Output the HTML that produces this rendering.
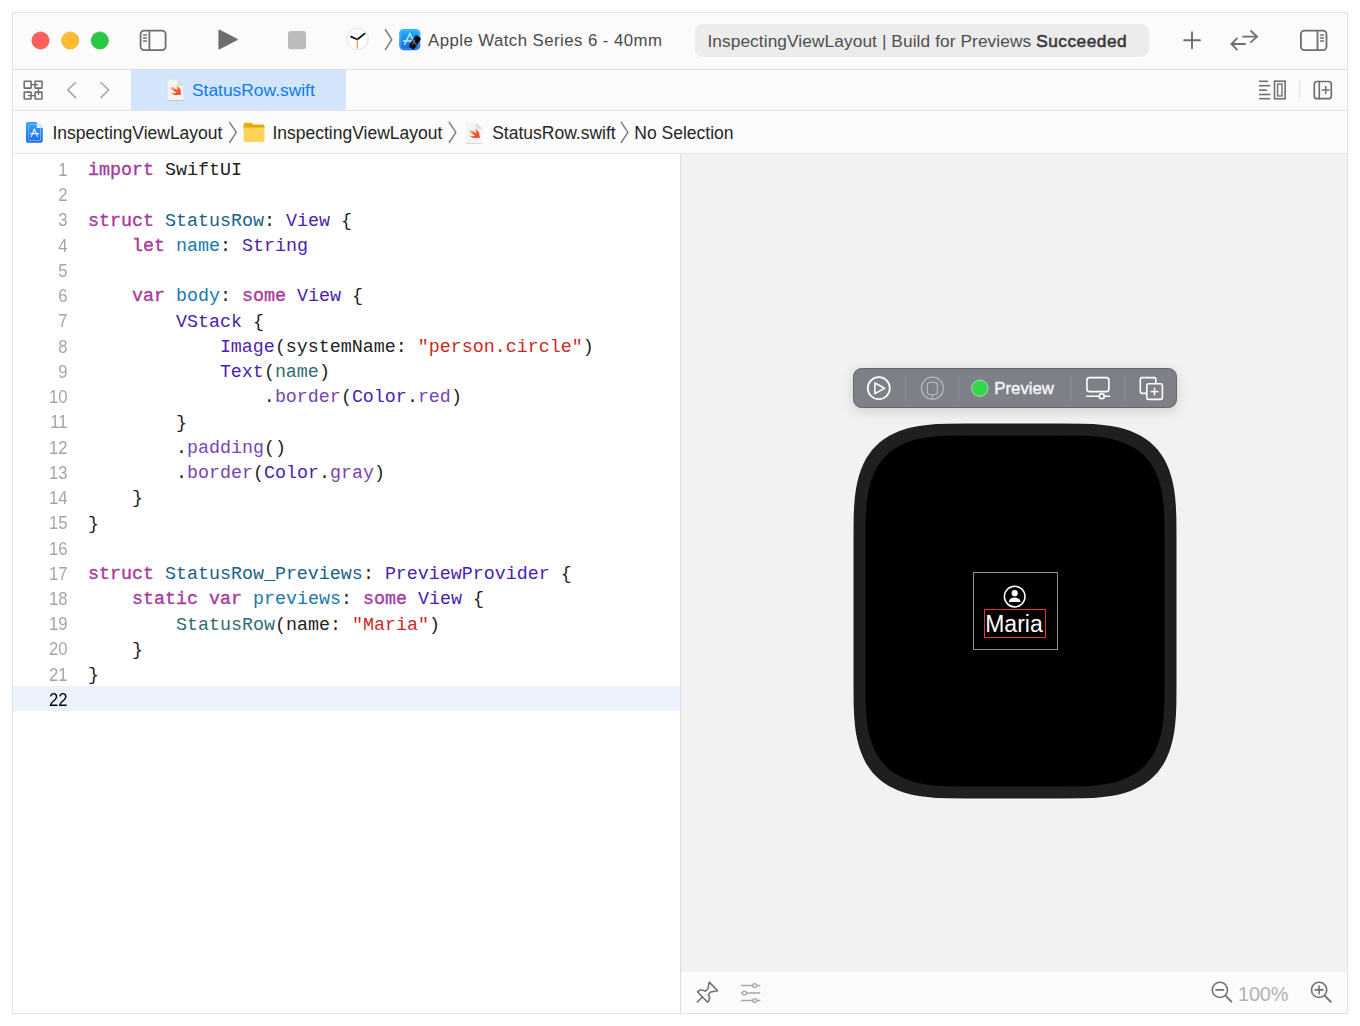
<!DOCTYPE html>
<html><head><meta charset="utf-8">
<style>
html,body{margin:0;padding:0;background:#fff;width:1360px;height:1026px;overflow:hidden;}
body{font-family:"Liberation Sans",sans-serif;position:relative;}
.a{position:absolute;}
.t{position:absolute;white-space:pre;font-family:"Liberation Sans",sans-serif;line-height:1;}
#code{position:absolute;left:87.9px;top:158.3px;font-family:"Liberation Mono",monospace;font-size:18.335px;line-height:25.24px;white-space:pre;color:#222222;}
#ln{position:absolute;left:13px;width:54.5px;top:157px;transform:scaleX(0.9);transform-origin:100% 0;font-family:"Liberation Sans",sans-serif;font-size:18.5px;line-height:25.24px;text-align:right;color:#a5a5a5;white-space:pre;}
.kw{color:#a73a9c;-webkit-text-stroke:0.35px #a73a9c;}
.td{color:#1a6188;}
.od{color:#1a78ad;}
.ty{color:#4a1eb0;}
.fn{color:#7844b5;}
.pv{color:#2f6c72;}
.st{color:#cc2a1f;}
</style></head>
<body>
<!-- window frame -->
<div class="a" style="left:12px;top:12px;width:1334px;height:1000px;border:1px solid #e3e3e3;"></div>
<!-- toolbar -->
<div class="a" style="left:13px;top:13px;width:1334px;height:56px;background:#fbfbfb;"></div>
<div class="a" style="left:13px;top:69px;width:1334px;height:1px;background:#dedede;"></div>
<!-- tab bar -->
<div class="a" style="left:13px;top:70px;width:1334px;height:40px;background:#fcfcfc;"></div>
<div class="a" style="left:131px;top:70px;width:215px;height:40px;background:#d3e5fa;"></div>
<div class="a" style="left:13px;top:110px;width:1334px;height:1px;background:#e1e1e1;"></div>
<!-- breadcrumbs -->
<div class="a" style="left:13px;top:111px;width:1334px;height:42px;background:#fcfcfc;"></div>
<div class="a" style="left:13px;top:153px;width:1334px;height:1px;background:#e6e6e6;"></div>
<!-- editor -->
<div class="a" style="left:13px;top:154px;width:667px;height:859px;background:#fff;"></div>
<div class="a" style="left:13px;top:686px;width:667px;height:25px;background:#ebf3fe;"></div>
<div class="a" style="left:680px;top:154px;width:1px;height:859px;background:#dcdcdc;"></div>
<!-- preview canvas -->
<div class="a" style="left:681px;top:154px;width:666px;height:818px;background:#f2f2f2;"></div>
<div class="a" style="left:681px;top:972px;width:666px;height:41px;background:#fcfcfc;"></div>

<!--SHAPES-->
<div class="a" style="left:695px;top:24px;width:454px;height:32.5px;border-radius:8px;background:#ececec;"></div>
<!-- preview floating toolbar -->
<div class="a" style="left:853px;top:368.3px;width:324px;height:39.4px;box-sizing:border-box;border-radius:8.5px;background:#7e8088;border:1.2px solid #65666b;box-shadow:0 3px 14px rgba(0,0,0,0.15);"></div>
<!-- watch -->
<svg class="a" style="left:0;top:0;" width="1360" height="1026" viewBox="0 0 1360 1026"><path id="wout" d="M1061.50 423.50 L1082.41 423.65 L1093.71 424.12 L1102.91 424.89 L1110.91 425.96 L1118.08 427.35 L1124.59 429.05 L1130.57 431.06 L1136.07 433.39 L1141.15 436.03 L1145.83 438.99 L1150.14 442.28 L1154.10 445.90 L1157.72 449.86 L1161.01 454.17 L1163.97 458.85 L1166.61 463.93 L1168.94 469.43 L1170.95 475.41 L1172.65 481.92 L1174.04 489.09 L1175.11 497.09 L1175.88 506.29 L1176.35 517.59 L1176.50 538.50 L1176.50 683.50 L1176.35 704.41 L1175.88 715.71 L1175.11 724.91 L1174.04 732.91 L1172.65 740.08 L1170.95 746.59 L1168.94 752.57 L1166.61 758.07 L1163.97 763.15 L1161.01 767.83 L1157.72 772.14 L1154.10 776.10 L1150.14 779.72 L1145.83 783.01 L1141.15 785.97 L1136.07 788.61 L1130.57 790.94 L1124.59 792.95 L1118.08 794.65 L1110.91 796.04 L1102.91 797.11 L1093.71 797.88 L1082.41 798.35 L1061.50 798.50 L968.50 798.50 L947.59 798.35 L936.29 797.88 L927.09 797.11 L919.09 796.04 L911.92 794.65 L905.41 792.95 L899.43 790.94 L893.93 788.61 L888.85 785.97 L884.17 783.01 L879.86 779.72 L875.90 776.10 L872.28 772.14 L868.99 767.83 L866.03 763.15 L863.39 758.07 L861.06 752.57 L859.05 746.59 L857.35 740.08 L855.96 732.91 L854.89 724.91 L854.12 715.71 L853.65 704.41 L853.50 683.50 L853.50 538.50 L853.65 517.59 L854.12 506.29 L854.89 497.09 L855.96 489.09 L857.35 481.92 L859.05 475.41 L861.06 469.43 L863.39 463.93 L866.03 458.85 L868.99 454.17 L872.28 449.86 L875.90 445.90 L879.86 442.28 L884.17 438.99 L888.85 436.03 L893.93 433.39 L899.43 431.06 L905.41 429.05 L911.92 427.35 L919.09 425.96 L927.09 424.89 L936.29 424.12 L947.59 423.65 L968.50 423.50 Z" fill="#1f1f1f"/><path id="win" d="M1061.50 435.50 L1079.73 435.64 L1089.77 436.06 L1097.99 436.76 L1105.17 437.74 L1111.61 439.01 L1117.47 440.55 L1122.86 442.38 L1127.83 444.49 L1132.42 446.89 L1136.66 449.58 L1140.57 452.56 L1144.16 455.84 L1147.44 459.43 L1150.42 463.34 L1153.11 467.58 L1155.51 472.17 L1157.62 477.14 L1159.45 482.53 L1160.99 488.39 L1162.26 494.83 L1163.24 502.01 L1163.94 510.23 L1164.36 520.27 L1164.50 538.50 L1164.50 683.50 L1164.36 701.73 L1163.94 711.77 L1163.24 719.99 L1162.26 727.17 L1160.99 733.61 L1159.45 739.47 L1157.62 744.86 L1155.51 749.83 L1153.11 754.42 L1150.42 758.66 L1147.44 762.57 L1144.16 766.16 L1140.57 769.44 L1136.66 772.42 L1132.42 775.11 L1127.83 777.51 L1122.86 779.62 L1117.47 781.45 L1111.61 782.99 L1105.17 784.26 L1097.99 785.24 L1089.77 785.94 L1079.73 786.36 L1061.50 786.50 L968.50 786.50 L950.27 786.36 L940.23 785.94 L932.01 785.24 L924.83 784.26 L918.39 782.99 L912.53 781.45 L907.14 779.62 L902.17 777.51 L897.58 775.11 L893.34 772.42 L889.43 769.44 L885.84 766.16 L882.56 762.57 L879.58 758.66 L876.89 754.42 L874.49 749.83 L872.38 744.86 L870.55 739.47 L869.01 733.61 L867.74 727.17 L866.76 719.99 L866.06 711.77 L865.64 701.73 L865.50 683.50 L865.50 538.50 L865.64 520.27 L866.06 510.23 L866.76 502.01 L867.74 494.83 L869.01 488.39 L870.55 482.53 L872.38 477.14 L874.49 472.17 L876.89 467.58 L879.58 463.34 L882.56 459.43 L885.84 455.84 L889.43 452.56 L893.34 449.58 L897.58 446.89 L902.17 444.49 L907.14 442.38 L912.53 440.55 L918.39 439.01 L924.83 437.74 L932.01 436.76 L940.23 436.06 L950.27 435.64 L968.50 435.50 Z" fill="#000"/></svg>

<div class="a" style="left:972.5px;top:571.5px;width:85.5px;height:78.5px;box-sizing:border-box;border:1.5px solid #8e8f94;"></div>
<div class="a" style="left:984.3px;top:609.3px;width:61.5px;height:29px;box-sizing:border-box;border:1.5px solid #e5392f;"></div>
<div id="ln">1
2
3
4
5
6
7
8
9
10
11
12
13
14
15
16
17
18
19
20
21
<span style="color:#000">22</span></div>
<div id="code"><span class="kw">import</span> SwiftUI

<span class="kw">struct</span> <span class="td">StatusRow</span>: <span class="ty">View</span> {
    <span class="kw">let</span> <span class="od">name</span>: <span class="ty">String</span>

    <span class="kw">var</span> <span class="od">body</span>: <span class="kw">some</span> <span class="ty">View</span> {
        <span class="ty">VStack</span> {
            <span class="ty">Image</span>(systemName: <span class="st">"person.circle"</span>)
            <span class="ty">Text</span>(<span class="pv">name</span>)
                .<span class="fn">border</span>(<span class="ty">Color</span>.<span class="fn">red</span>)
        }
        .<span class="fn">padding</span>()
        .<span class="fn">border</span>(<span class="ty">Color</span>.<span class="fn">gray</span>)
    }
}

<span class="kw">struct</span> <span class="td">StatusRow_Previews</span>: <span class="ty">PreviewProvider</span> {
    <span class="kw">static</span> <span class="kw">var</span> <span class="od">previews</span>: <span class="kw">some</span> <span class="ty">View</span> {
        <span class="pv">StatusRow</span>(name: <span class="st">"Maria"</span>)
    }
}
</div>

<div class="t" style="left:428px;top:32.98px;font-size:16.8px;letter-spacing:0.45px;color:#4a4a4a;">Apple Watch Series 6 - 40mm</div>
<div class="t" style="left:707.4px;top:32.56px;font-size:17.3px;color:#4f4f4f;letter-spacing:0.09px;">InspectingViewLayout | Build for Previews <span style="color:#383838;font-size:17.3px;letter-spacing:0.5px;-webkit-text-stroke:0.55px #383838;">Succeeded</span></div>
<div class="t" style="left:192px;top:82.27px;font-size:17.4px;color:#0d7af6;">StatusRow.swift</div>
<div class="t" style="left:52.5px;top:124.69px;font-size:17.5px;color:#262626;">InspectingViewLayout</div>
<div class="t" style="left:272.4px;top:124.69px;font-size:17.5px;color:#262626;">InspectingViewLayout</div>
<div class="t" style="left:492.2px;top:124.69px;font-size:17.5px;color:#262626;">StatusRow.swift</div>
<div class="t" style="left:634.3px;top:124.69px;font-size:17.5px;color:#262626;">No Selection</div>
<div class="t" style="left:994.3px;top:381.4px;font-size:16.8px;color:#f4f4f4;-webkit-text-stroke:0.45px #f4f4f4;">Preview</div>
<div class="t" style="left:985.2px;top:613.43px;font-size:23px;color:#ffffff;">Maria</div>
<div class="t" style="left:1238px;top:984.47px;font-size:20px;color:#b3b3b3;letter-spacing:-0.2px;">100%</div>

<svg class="a" style="left:0;top:0;" width="1360" height="1026" viewBox="0 0 1360 1026">
<defs>
 <linearGradient id="appg" x1="0" y1="0" x2="0" y2="1"><stop offset="0" stop-color="#22b5fa"/><stop offset="1" stop-color="#1565e6"/></linearGradient>
 <linearGradient id="projg" x1="0" y1="0" x2="0" y2="1"><stop offset="0" stop-color="#3aa0f8"/><stop offset="1" stop-color="#1a6fe0"/></linearGradient>
 <linearGradient id="swg" x1="0" y1="0" x2="1" y2="1"><stop offset="0" stop-color="#f88a3a"/><stop offset="1" stop-color="#f03a2a"/></linearGradient>
 <linearGradient id="foldg" x1="0" y1="0" x2="0" y2="1"><stop offset="0" stop-color="#fcd55a"/><stop offset="1" stop-color="#f7c236"/></linearGradient>
</defs>
<!-- toolbar: traffic lights -->
<circle cx="40.5" cy="40.5" r="8.6" fill="#fe5f57" stroke="#e0443e" stroke-width="0.6"/>
<circle cx="70.2" cy="40.5" r="8.6" fill="#febc2e" stroke="#dea02a" stroke-width="0.6"/>
<circle cx="99.8" cy="40.5" r="8.6" fill="#28c840" stroke="#1eaa30" stroke-width="0.6"/>
<!-- sidebar toggle -->
<g fill="none" stroke="#6e6e6e" stroke-width="1.8" stroke-linecap="round">
 <rect x="140.6" y="30.6" width="25" height="19.6" rx="3.6"/>
 <line x1="149.4" y1="30.6" x2="149.4" y2="50.2"/>
 <line x1="143.6" y1="35" x2="146.4" y2="35" stroke-width="1.6"/>
 <line x1="143.6" y1="38" x2="146.4" y2="38" stroke-width="1.6"/>
 <line x1="143.6" y1="41" x2="146.4" y2="41" stroke-width="1.6"/>
</g>
<!-- play -->
<path d="M219.3,30.6 L236.8,39.5 L219.3,48.5 Z" fill="#6e6e6e" stroke="#6e6e6e" stroke-width="1.8" stroke-linejoin="round"/>
<!-- stop -->
<rect x="288" y="31" width="18" height="18.2" rx="2.6" fill="#bcbcbc"/>
<!-- clock -->
<circle cx="357.6" cy="39" r="10.6" fill="#ffffff" stroke="#dadada" stroke-width="0.8"/>
<path d="M351.1,36.6 L357.3,39.5 L364.6,33.6" fill="none" stroke="#111" stroke-width="1.8" stroke-linecap="round" stroke-linejoin="round"/>
<line x1="357.3" y1="39.5" x2="357.3" y2="48.4" stroke="#f29b38" stroke-width="1.3"/>
<!-- chevron -->
<polyline points="385.4,29.6 391.8,39.6 385.4,49.6" fill="none" stroke="#707070" stroke-width="1.4" stroke-linecap="round" stroke-linejoin="round"/>
<!-- app icon -->
<rect x="399.3" y="29" width="21" height="21.2" rx="4.6" fill="url(#appg)"/>
<rect x="400.6" y="30.3" width="18.4" height="18.6" rx="3.6" fill="none" stroke="#7fd0ff" stroke-width="0.6" opacity="0.7"/>
<g stroke="#cfe8ff" stroke-width="1.4" stroke-linecap="round" fill="none">
 <line x1="410" y1="33.5" x2="404.5" y2="44.5"/>
 <line x1="409.5" y1="33.5" x2="414.5" y2="42"/>
 <line x1="403.5" y1="41" x2="414" y2="41"/>
</g>
<rect x="-3.2" y="-6.9" width="6.4" height="13.8" rx="1.6" fill="#0d0d0d" transform="translate(414.9,42.4) rotate(33.6)"/>
<path d="M413.2,40.2 L416.6,45.2 M414.8,39.4 L412.4,44.8" stroke="#9a9a9a" stroke-width="0.9" fill="none"/>
<!-- plus -->
<g stroke="#6e6e6e" stroke-width="1.9" stroke-linecap="round" fill="none">
 <line x1="1184.2" y1="40.2" x2="1200" y2="40.2"/>
 <line x1="1192" y1="32.3" x2="1192" y2="48.3"/>
</g>
<!-- arrows -->
<g stroke="#6e6e6e" stroke-width="1.8" stroke-linecap="round" stroke-linejoin="round" fill="none">
 <line x1="1243" y1="36.6" x2="1257" y2="36.6"/>
 <polyline points="1251,31 1257,36.6 1251,42.2"/>
 <line x1="1231.5" y1="44" x2="1245" y2="44"/>
 <polyline points="1237,38.4 1231.5,44 1237,49.6"/>
</g>
<!-- inspector toggle -->
<g fill="none" stroke="#6e6e6e" stroke-width="1.8" stroke-linecap="round">
 <rect x="1300.9" y="30.6" width="25.6" height="19.6" rx="3.6"/>
 <line x1="1317.5" y1="30.6" x2="1317.5" y2="50.2"/>
 <line x1="1320.6" y1="35" x2="1323.4" y2="35" stroke-width="1.6"/>
 <line x1="1320.6" y1="38" x2="1323.4" y2="38" stroke-width="1.6"/>
 <line x1="1320.6" y1="41" x2="1323.4" y2="41" stroke-width="1.6"/>
</g>
</svg>

<svg class="a" style="left:0;top:0;" width="1360" height="1026" viewBox="0 0 1360 1026">
<defs>
 <linearGradient id="projg" x1="0" y1="0" x2="0" y2="1"><stop offset="0" stop-color="#1ea6f4"/><stop offset="1" stop-color="#0065e2"/></linearGradient>
 <linearGradient id="swg" x1="0" y1="0" x2="0.6" y2="1"><stop offset="0" stop-color="#f9a45a"/><stop offset="1" stop-color="#f53524"/></linearGradient>
 <filter id="sh" x="-30%" y="-30%" width="160%" height="160%"><feDropShadow dx="0" dy="0.6" stdDeviation="0.6" flood-color="#000" flood-opacity="0.22"/></filter>
 <g id="swiftdoc">
  <path d="M0.5,0 L10.5,0 L16.5,6 L16.5,20.2 L0.5,20.2 Z" fill="#f4f4f4" filter="url(#sh)"/>
  <path d="M10.5,0 L10.5,6 L16.5,6 Z" fill="#dcdcdc"/>
  <path transform="translate(1.3,4.1) scale(0.15,0.137)" d="M82,66 C84,60 85,45 74,30 C66,20 55,12 55,12 C55,12 64,28 60,45 C45,35 25,20 20,15 C30,28 38,38 45,45 C35,40 20,30 12,25 C25,42 40,57 55,65 C45,70 30,70 15,62 C25,75 45,85 62,80 C70,78 78,77 85,82 C88,78 84,70 82,66 Z" fill="url(#swg)"/>
 </g>
</defs>
<!-- tab bar: grid icon -->
<g fill="none" stroke="#6e6e6e" stroke-width="1.55">
 <rect x="24.2" y="81.2" width="6.9" height="6.9" rx="0.4"/>
 <rect x="35.1" y="81.2" width="6.9" height="6.9" rx="0.4"/>
 <rect x="24.2" y="92.1" width="6.9" height="6.9" rx="0.4"/>
 <rect x="35.1" y="92.1" width="6.9" height="6.9" rx="0.4"/>
 <line x1="31.1" y1="84.6" x2="38" y2="84.6" stroke-width="1.3"/>
 <line x1="38.5" y1="88.1" x2="38.5" y2="95" stroke-width="1.3"/>
 <line x1="35.1" y1="95.6" x2="28" y2="95.6" stroke-width="1.3"/>
</g>
<g fill="none" stroke="#a9a9a9" stroke-width="1.6" stroke-linecap="round" stroke-linejoin="round">
 <polyline points="75.6,82.5 67.8,89.9 75.6,97.6"/>
 <polyline points="100.9,82.5 108.7,89.9 100.9,97.6"/>
</g>
<!-- tab file icon -->
<use href="#swiftdoc" x="167" y="79.8"/>
<!-- tab bar right icons -->
<g fill="none" stroke="#707070" stroke-width="1.6">
 <line x1="1259" y1="81.3" x2="1268" y2="81.3"/>
 <line x1="1259" y1="85.7" x2="1270.3" y2="85.7"/>
 <line x1="1259" y1="90.1" x2="1267" y2="90.1"/>
 <line x1="1259" y1="94.5" x2="1270.3" y2="94.5"/>
 <line x1="1259" y1="98.7" x2="1270.3" y2="98.7"/>
 <rect x="1274.5" y="81.2" width="10.6" height="17.6"/>
 <rect x="1277.6" y="84" width="4.4" height="12" stroke-width="1.4"/>
</g>
<line x1="1299.7" y1="81" x2="1299.7" y2="98" stroke="#dcdcdc" stroke-width="1"/>
<g fill="none" stroke="#707070" stroke-width="1.7" stroke-linecap="round">
 <rect x="1314.3" y="81.5" width="17" height="17.2" rx="2.8"/>
 <line x1="1319.3" y1="81.5" x2="1319.3" y2="98.7"/>
 <line x1="1322.2" y1="90.1" x2="1329.2" y2="90.1" stroke-width="1.5"/>
 <line x1="1325.7" y1="86.6" x2="1325.7" y2="93.6" stroke-width="1.5"/>
</g>
<!-- breadcrumbs -->
<path d="M28,122 L36.7,122 L42.8,128.1 L42.8,140.8 Q42.8,142.8 40.8,142.8 L28,142.8 Q26,142.8 26,140.8 L26,124 Q26,122 28,122 Z" fill="url(#projg)"/>
<path d="M36.7,122 L36.7,128.1 L42.8,128.1 Z" fill="#ffffff" opacity="0.85"/>
<rect x="28.8" y="124.6" width="11.6" height="15.8" fill="none" stroke="#9fd4ff" stroke-width="0.7" opacity="0.8"/>
<g fill="none" stroke="#e8f4ff" stroke-width="1.1" stroke-linecap="round">
 <path d="M34.3,129 L31.3,136.6 M34.3,129 L37.6,136.6 M30.6,133.6 L38.6,133.6"/>
</g>
<g fill="none" stroke="#7a7a7a" stroke-width="1.4" stroke-linecap="round" stroke-linejoin="round">
 <polyline points="229.6,122.3 236.3,132.4 229.6,142.5"/>
 <polyline points="449.2,122.3 455.9,132.4 449.2,142.5"/>
 <polyline points="621.2,122.3 627.9,132.4 621.2,142.5"/>
</g>
<!-- folder -->
<path d="M245.3,122.7 L250.6,122.7 Q251.6,122.7 252.4,123.6 L253.3,124.6 L262.6,124.6 Q264.5,124.6 264.5,126.6 L264.5,129 L243.6,129 L243.6,124.4 Q243.6,122.7 245.3,122.7 Z" fill="#e2ae06"/>
<path d="M243.6,127 L264.5,127 L264.5,140 Q264.5,142 262.5,142 L245.6,142 Q243.6,142 243.6,140 Z" fill="#fdd35a"/>
<line x1="243.8" y1="127.2" x2="264.3" y2="127.2" stroke="#c99a00" stroke-width="0.8" opacity="0.7"/>
<!-- swift doc breadcrumb -->
<use href="#swiftdoc" x="465.7" y="122.8"/>
</svg>

<svg class="a" style="left:0;top:0;" width="1360" height="1026" viewBox="0 0 1360 1026">
<!-- preview floating toolbar icons -->
<g fill="none" stroke="#ffffff" stroke-width="1.7" stroke-linejoin="round">
 <circle cx="878.8" cy="388.2" r="11"/>
 <path d="M874.9,383 L884.6,388.3 L874.9,393.6 Z" stroke-width="1.6" stroke-linejoin="round"/>
</g>
<g stroke="#8d8f96" stroke-width="1">
 <line x1="905.3" y1="376" x2="905.3" y2="400.5"/>
 <line x1="958.8" y1="376" x2="958.8" y2="400.5"/>
 <line x1="1071" y1="376" x2="1071" y2="400.5"/>
 <line x1="1124.8" y1="376" x2="1124.8" y2="400.5"/>
</g>
<g fill="none" stroke="#b3b4b9" stroke-width="1.3">
 <circle cx="932.4" cy="388.2" r="11"/>
 <rect x="927.4" y="382.3" width="10" height="12.4" rx="2.6"/>
 <line x1="932.4" y1="394.7" x2="932.4" y2="399.2"/>
</g>
<circle cx="979.8" cy="388.2" r="8.2" fill="#32d74b" stroke="#a9d6b0" stroke-width="1"/>
<g fill="none" stroke="#ffffff" stroke-width="1.6" stroke-linecap="round">
 <rect x="1086.9" y="377.6" width="22" height="14" rx="2.6"/>
 <line x1="1086.6" y1="396.3" x2="1099.2" y2="396.3"/>
 <line x1="1104.4" y1="396.3" x2="1109.4" y2="396.3"/>
 <circle cx="1101.8" cy="396.3" r="2.5"/>
</g>
<g fill="none" stroke="#ffffff" stroke-width="1.6">
 <path d="M1146.6,393.4 L1141.9,393.4 Q1140.3,393.4 1140.3,391.8 L1140.3,379.2 Q1140.3,377.6 1141.9,377.6 L1154.2,377.6 Q1155.8,377.6 1155.8,379.2 L1155.8,383.7"/>
 <rect x="1146.8" y="383.8" width="15.6" height="15.6" rx="1.8"/>
 <line x1="1150.6" y1="391.6" x2="1158.4" y2="391.6" stroke-width="1.5"/>
 <line x1="1154.5" y1="387.7" x2="1154.5" y2="395.5" stroke-width="1.5"/>
</g>
<!-- person.circle -->
<circle cx="1014.7" cy="596.6" r="10.3" fill="none" stroke="#ffffff" stroke-width="1.5"/>
<circle cx="1014.7" cy="593.2" r="3.1" fill="#ffffff"/>
<path d="M1008.8,601.9 Q1009.6,597.6 1014.7,597.6 Q1019.8,597.6 1020.6,601.9 Z" fill="#ffffff"/>
<!-- bottom bar icons -->
<g fill="none" stroke="#6e6e6e" stroke-width="1.5" stroke-linejoin="round" stroke-linecap="round" transform="translate(697.3,1002) rotate(-44)">
 <line x1="0" y1="0" x2="7.2" y2="0"/>
 <path d="M7.2,-7.4 L7.2,7.4 C10.6,7.4 13,5 13,2.3 L16.6,2 L22.4,6 L22.4,-6 L16.6,-2 L13,-2.3 C13,-5 10.6,-7.4 7.2,-7.4 Z"/>
</g>
<g fill="none" stroke="#a7a7a7" stroke-width="1.4" stroke-linecap="round">
 <line x1="741.4" y1="985.5" x2="752.6" y2="985.5"/><line x1="756.8" y1="985.5" x2="759.8" y2="985.5"/><circle cx="754.7" cy="985.5" r="1.9"/>
 <line x1="746.5" y1="993" x2="759.8" y2="993"/><line x1="741.4" y1="993" x2="742.3" y2="993"/><circle cx="744.4" cy="993" r="1.9"/>
 <line x1="741.4" y1="1000.5" x2="752.6" y2="1000.5"/><line x1="756.8" y1="1000.5" x2="759.8" y2="1000.5"/><circle cx="754.7" cy="1000.5" r="1.9"/>
</g>
<g fill="none" stroke="#707070" stroke-width="1.6" stroke-linecap="round">
 <circle cx="1219.9" cy="989.9" r="7.6"/>
 <line x1="1216" y1="989.9" x2="1223.6" y2="989.9"/>
 <line x1="1225.5" y1="995.6" x2="1231.4" y2="1001.6" stroke-width="1.9"/>
 <circle cx="1319.1" cy="989.9" r="7.6"/>
 <line x1="1315.2" y1="989.9" x2="1323" y2="989.9"/>
 <line x1="1319.1" y1="986" x2="1319.1" y2="993.8"/>
 <line x1="1324.7" y1="995.6" x2="1330.8" y2="1001.8" stroke-width="1.9"/>
</g>
</svg>

<!--ICONS-->

</body></html>
